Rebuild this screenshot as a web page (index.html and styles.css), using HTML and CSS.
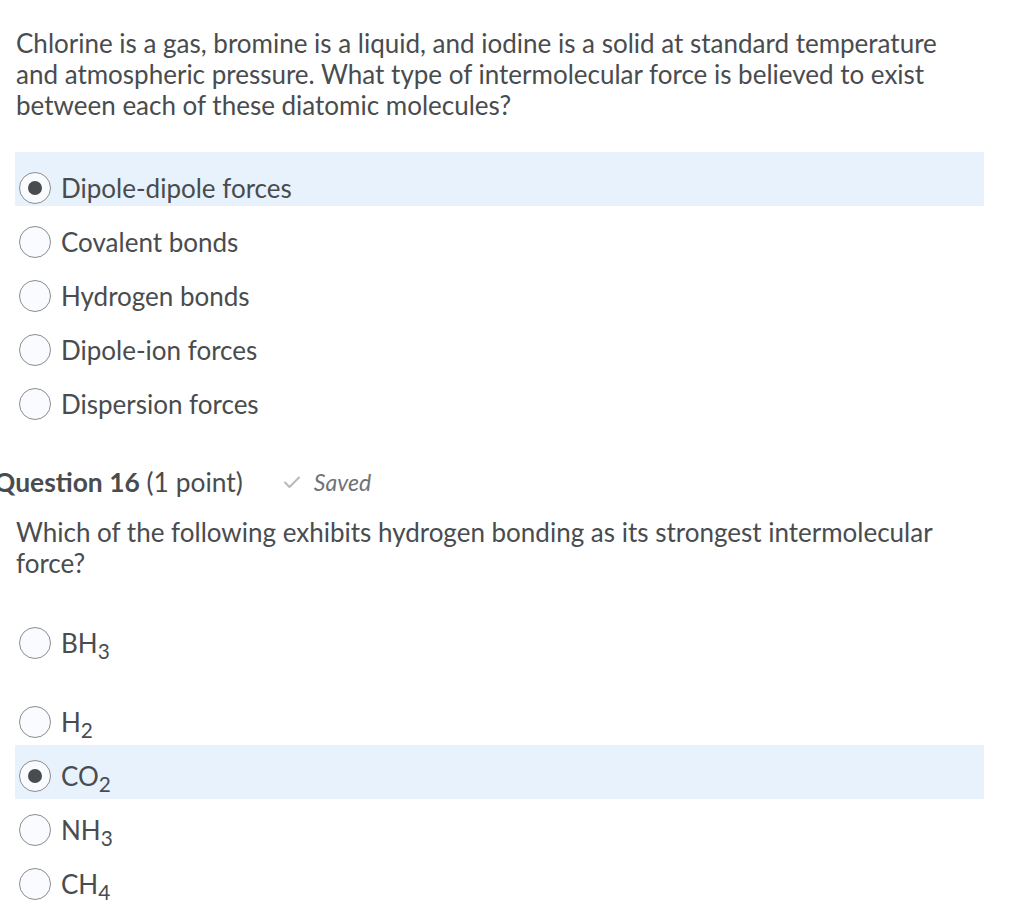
FILE: index.html
```html
<!DOCTYPE html>
<html>
<head>
<meta charset="utf-8">
<link rel="stylesheet" href="styles.css">
</head>
<body>
<div class="page">
  <section class="question q1">
    <p class="qtext">Chlorine is a gas, bromine is a liquid, and iodine is a solid at standard temperature and atmospheric pressure. What type of intermolecular force is believed to exist between each of these diatomic molecules?</p>
    <ul class="options">
      <li class="opt selected"><span class="radio"><span class="dot"></span></span><span class="label">Dipole-dipole forces</span></li>
      <li class="opt"><span class="radio"></span><span class="label">Covalent bonds</span></li>
      <li class="opt"><span class="radio"></span><span class="label">Hydrogen bonds</span></li>
      <li class="opt"><span class="radio"></span><span class="label">Dipole-ion forces</span></li>
      <li class="opt"><span class="radio"></span><span class="label">Dispersion forces</span></li>
    </ul>
  </section>

  <header class="qhead">
    <h2 class="qtitle"><b>Question 16</b> (1 point)</h2>
    <span class="saved"><svg class="check" width="18" height="14" viewBox="0 0 18 14"><path d="M2 7.5 L6.5 12 L16 2.5" fill="none" stroke="#b5b9bc" stroke-width="2" stroke-linecap="round" stroke-linejoin="round"/></svg><i>Saved</i></span>
  </header>

  <section class="question q2">
    <p class="qtext">Which of the following exhibits hydrogen bonding as its strongest intermolecular force?</p>
    <ul class="options">
      <li class="opt first"><span class="radio"></span><span class="label">BH<sub>3</sub></span></li>
      <li class="opt"><span class="radio"></span><span class="label">H<sub>2</sub></span></li>
      <li class="opt selected"><span class="radio"><span class="dot"></span></span><span class="label">CO<sub>2</sub></span></li>
      <li class="opt"><span class="radio"></span><span class="label">NH<sub>3</sub></span></li>
      <li class="opt"><span class="radio"></span><span class="label">CH<sub>4</sub></span></li>
    </ul>
  </section>
</div>
</body>
</html>
```

FILE: styles.css
```css
html, body {
  margin: 0;
  padding: 0;
  background: #ffffff;
}
body {
  font-family: Lato, "Open Sans", sans-serif;
  color: #494c4e;
}
.page {
  width: 969px;
  margin-left: 15px;
  padding-top: 28px;
}
.qtext {
  margin: 0;
  padding-left: 1px;
  font-size: 26px;
  line-height: 31px;
}
.options {
  list-style: none;
  margin: 0;
  padding: 0;
}
.q1 .options {
  margin-top: 31px;
}
.opt {
  display: flex;
  align-items: center;
  height: 54px;
  padding-left: 4px;
  box-sizing: border-box;
}
.q1 .opt {
  padding-top: 18px;
}
.q2 .opt {
  padding-top: 8px;
}
.opt.selected {
  background: #e8f2fc;
}
.radio {
  width: 32px;
  height: 32px;
  box-sizing: border-box;
  border: 1.5px solid #8a8d90;
  border-radius: 50%;
  background: #f9fbff;
  display: flex;
  align-items: center;
  justify-content: center;
  flex: none;
}
.dot {
  width: 14px;
  height: 14px;
  border-radius: 50%;
  background: #494c4e;
}
.label {
  margin-left: 10px;
  font-size: 26px;
  line-height: 30px;
}
.label sub {
  font-size: 0.8em;
  vertical-align: -6px;
  line-height: 0;
}
.qhead {
  display: flex;
  align-items: center;
  margin-top: 43px;
  margin-left: -21px;
  height: 34px;
}
.qtitle {
  margin: 0;
  font-size: 26.4px;
  font-weight: 400;
  line-height: 34px;
  white-space: nowrap;
}
.qtitle b {
  font-weight: 700;
}
.saved {
  display: flex;
  align-items: center;
  margin-left: 40px;
  color: #6e7376;
  font-size: 23px;
}
.check {
  margin-right: 13px;
}
.q2 .qtext {
  margin-top: 18px;
}
.q2 .options {
  margin-top: 33px;
}
.q2 .opt.first {
  margin-bottom: 25px;
}
```
